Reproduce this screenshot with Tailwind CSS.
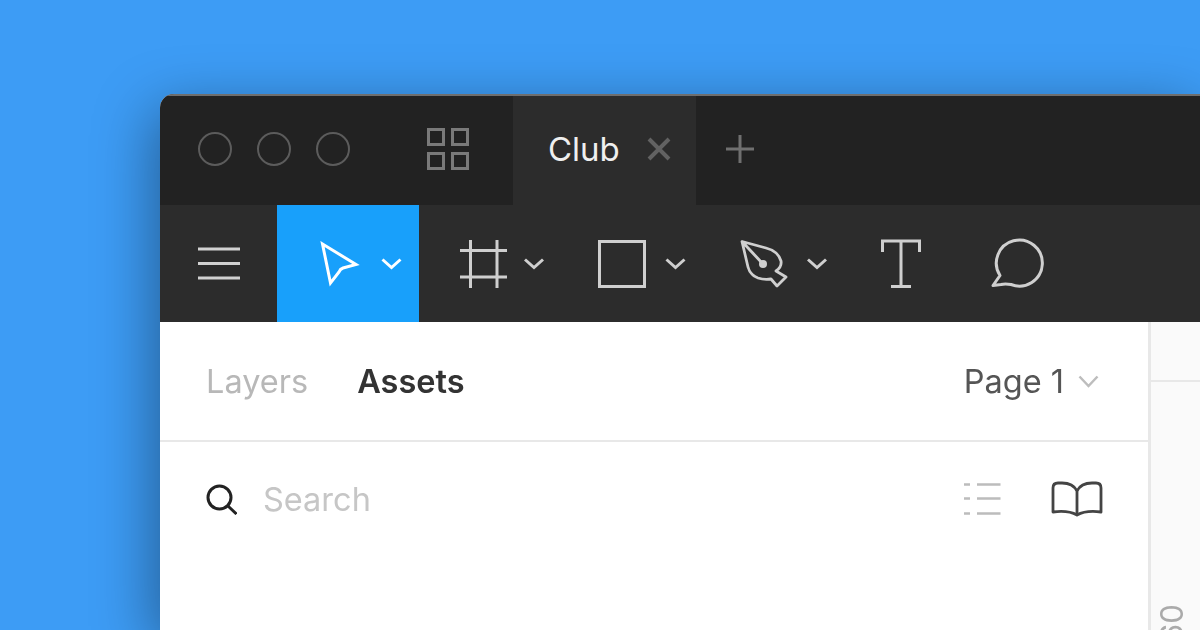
<!doctype html>
<html>
<head>
<meta charset="utf-8">
<script src="https://cdn.jsdelivr.net/npm/@tailwindcss/browser@4"></script>
</head>
<body class="w-[1200px] h-[630px] overflow-hidden bg-[#3d9cf5] font-['Inter','Liberation_Sans',sans-serif]">
<div class="pt-[94px] pl-[160px] h-[630px]">
  <div class="w-[1040px] h-[536px] rounded-tl-[14px] overflow-hidden shadow-[-6px_16px_60px_rgba(0,0,0,0.4)] flex flex-col bg-white blur-[0.5px]">
    <!-- title bar -->
    <div class="h-[111px] shrink-0 bg-[#222222] border-t-2 border-[#6e6e6e] flex items-stretch pb-[3px]">
      <div class="flex items-center w-[353px] pl-[38px] gap-[25px]">
        <div class="w-[34px] h-[34px] rounded-full border-[2.5px] border-[#5c5c5c]"></div>
        <div class="w-[34px] h-[34px] rounded-full border-[2.5px] border-[#5c5c5c]"></div>
        <div class="w-[34px] h-[34px] rounded-full border-[2.5px] border-[#5c5c5c]"></div>
        <svg class="ml-[52px] shrink-0" width="42" height="42" viewBox="428 128 42 42" fill="none" stroke="#7a7a7a" stroke-width="3">
          <rect x="429.5" y="129.5" width="15" height="15"/><rect x="453.5" y="129.5" width="15" height="15"/>
          <rect x="429.5" y="153.5" width="15" height="15"/><rect x="453.5" y="153.5" width="15" height="15"/>
        </svg>
      </div>
      <div class="w-[183px] bg-[#2c2c2c] -mb-[3px] pb-[3px] flex items-center pl-[35px]">
        <span class="text-[33px] text-[#efefef] leading-none w-[99px]">Club</span>
        <svg width="24" height="24" viewBox="646 137 24 24" fill="none" stroke="#626262" stroke-width="4"><path d="M648 139 668 159M668 139 648 159"/></svg>
      </div>
      <div class="flex items-center pl-[30px]">
        <svg width="28" height="28" viewBox="726 135 28 28" fill="none" stroke="#707070" stroke-width="3"><path d="M740 135V163M726 149H754"/></svg>
      </div>
    </div>
    <!-- toolbar -->
    <div class="h-[117px] shrink-0 bg-[#2c2c2c] flex items-stretch">
      <div class="w-[117px] flex items-center justify-center">
        <svg width="42" height="34" viewBox="197 245 42 34" fill="none" stroke="#d2d2d2" stroke-width="3"><path d="M197 247H239M197 261.500H239M197 276H239"/></svg>
      </div>
      <div class="w-[142px] bg-[#18a0fb] flex items-center pl-[43px]">
        <svg width="40" height="46" viewBox="320 240 40 46" fill="none" stroke="#ffffff" stroke-width="3" stroke-linejoin="miter"><path d="M322.500 243 356 263.500 343 267Q340 268 339 271L330.500 282Z"/></svg>
        <svg class="ml-[21px]" width="21" height="12" viewBox="382 260 21 12" fill="none" stroke="#ffffff" stroke-width="3"><path d="M383.500 261.500 392.500 269.500 401.500 261.500"/></svg>
      </div>
      <div class="flex items-center pl-[40px]">
        <svg width="48" height="48" viewBox="459 239 48 48" fill="none" stroke="#cfcfcf" stroke-width="3"><path d="M470.500 239V287M497 239V287M460 249.500H507M460 276H507"/></svg>
        <svg class="ml-[16px]" width="21" height="12" viewBox="523 260 21 12" fill="none" stroke="#cfcfcf" stroke-width="3"><path d="M525 261.500 534 269.500 543 261.500"/></svg>
        <svg class="ml-[54px]" width="48" height="48" viewBox="598 239 48 48" fill="none" stroke="#cfcfcf" stroke-width="3"><rect x="599.500" y="240.500" width="45" height="45"/></svg>
        <svg class="ml-[19px]" width="21" height="12" viewBox="665 260 21 12" fill="none" stroke="#cfcfcf" stroke-width="3"><path d="M666.500 261.500 675.500 269.500 684.500 261.500"/></svg>
        <svg class="ml-[53px]" width="50" height="50" viewBox="739 238 50 50" fill="none" stroke="#cfcfcf" stroke-width="2.800" stroke-linejoin="round">
          <path d="M742 240.500 763 263M742 240.500 766 247Q778 250 781 260 782 266 776 270L786 276 777 285 771 278Q764 279 758 277 750 274 748 266Z"/>
          <circle cx="763" cy="263" r="4" fill="#cfcfcf" stroke="none"/>
        </svg>
        <svg class="ml-[18px]" width="21" height="12" viewBox="807 260 21 12" fill="none" stroke="#cfcfcf" stroke-width="3"><path d="M808 261.500 817 269.500 826 261.500"/></svg>
        <svg class="ml-[53px]" width="40" height="50" viewBox="881 238 40 50" fill="none" stroke="#cfcfcf" stroke-width="3"><path d="M882.500 251V240H919.500V251M901 240V285.500M891 285.500H911"/></svg>
        <svg class="ml-[70px]" width="54" height="52" viewBox="992 238 54 52" fill="none" stroke="#cfcfcf" stroke-width="3" stroke-linejoin="round"><path d="M994 285.500 1001 275.500A23 23 0 1 1 1012 284.500Q1006 283.500 1002 284.500Z"/></svg>
      </div>
    </div>
    <!-- body -->
    <div class="flex-1 flex min-h-0">
      <div class="w-[988px] shrink-0 flex flex-col">
        <div class="h-[120px] shrink-0 border-b-[2.500px] border-[#e8e8e8] flex items-center pl-[46px] pr-[49px] text-[32.500px] leading-none">
          <span class="text-[#b8b8b8] pt-[2px]">Layers</span>
          <span class="ml-[49px] font-semibold text-[#333333] pt-[2px]">Assets</span>
          <span class="ml-auto text-[#555555] pt-[2px]">Page 1</span>
          <svg class="ml-[14px]" width="21" height="13" viewBox="1078 377 21 13" fill="none" stroke="#bdbdbd" stroke-width="2.500"><path d="M1079.500 378.500 1088.500 388 1097.500 378.500"/></svg>
        </div>
        <div class="h-[116px] shrink-0 flex items-center pl-[45px] pr-[45px] pb-[2px]">
          <svg width="32" height="32" viewBox="205 483 32 32" fill="none" stroke="#222222" stroke-width="3"><circle cx="219.500" cy="497.500" r="11.500"/><path d="M228 506 236.500 514"/></svg>
          <span class="ml-[26px] text-[32.500px] leading-none text-[#c6c6c6] pt-[2px]">Search</span>
          <svg class="ml-auto" width="38" height="32" viewBox="963 482 38 32" fill="none" stroke="#bcbcbc" stroke-width="2.500"><path d="M964 483.500H970M977 483.500H1000.500M964 497.500H970M977 497.500H1000.500M964 512.500H970M977 512.500H1000.500"/></svg>
          <svg class="ml-[50px]" width="52" height="36" viewBox="1051 481 52 36" fill="none" stroke="#444444" stroke-width="2.800" stroke-linejoin="round"><path d="M1077 491Q1073 483 1062 483H1058Q1053 483 1053 488V512Q1068 510 1077 515 1086 510 1101 512V488Q1101 483 1096 483H1092Q1081 483 1077 491V515"/></svg>
        </div>
      </div>
      <div class="w-[3px] bg-[#e8e8e8] shrink-0"></div>
      <div class="flex-1 bg-[#fafafa] flex flex-col">
        <div class="h-[60px] shrink-0 border-b-[2.500px] border-[#e8e8e8]"></div>
        <div class="pl-[5px] pt-[221px] h-[400px]">
          <span class="block [writing-mode:vertical-rl] rotate-180 text-[31px] leading-[31px] text-[#aaaaaa] h-[40px]">60</span>
        </div>
      </div>
    </div>
  </div>
</div>
</body>
</html>
